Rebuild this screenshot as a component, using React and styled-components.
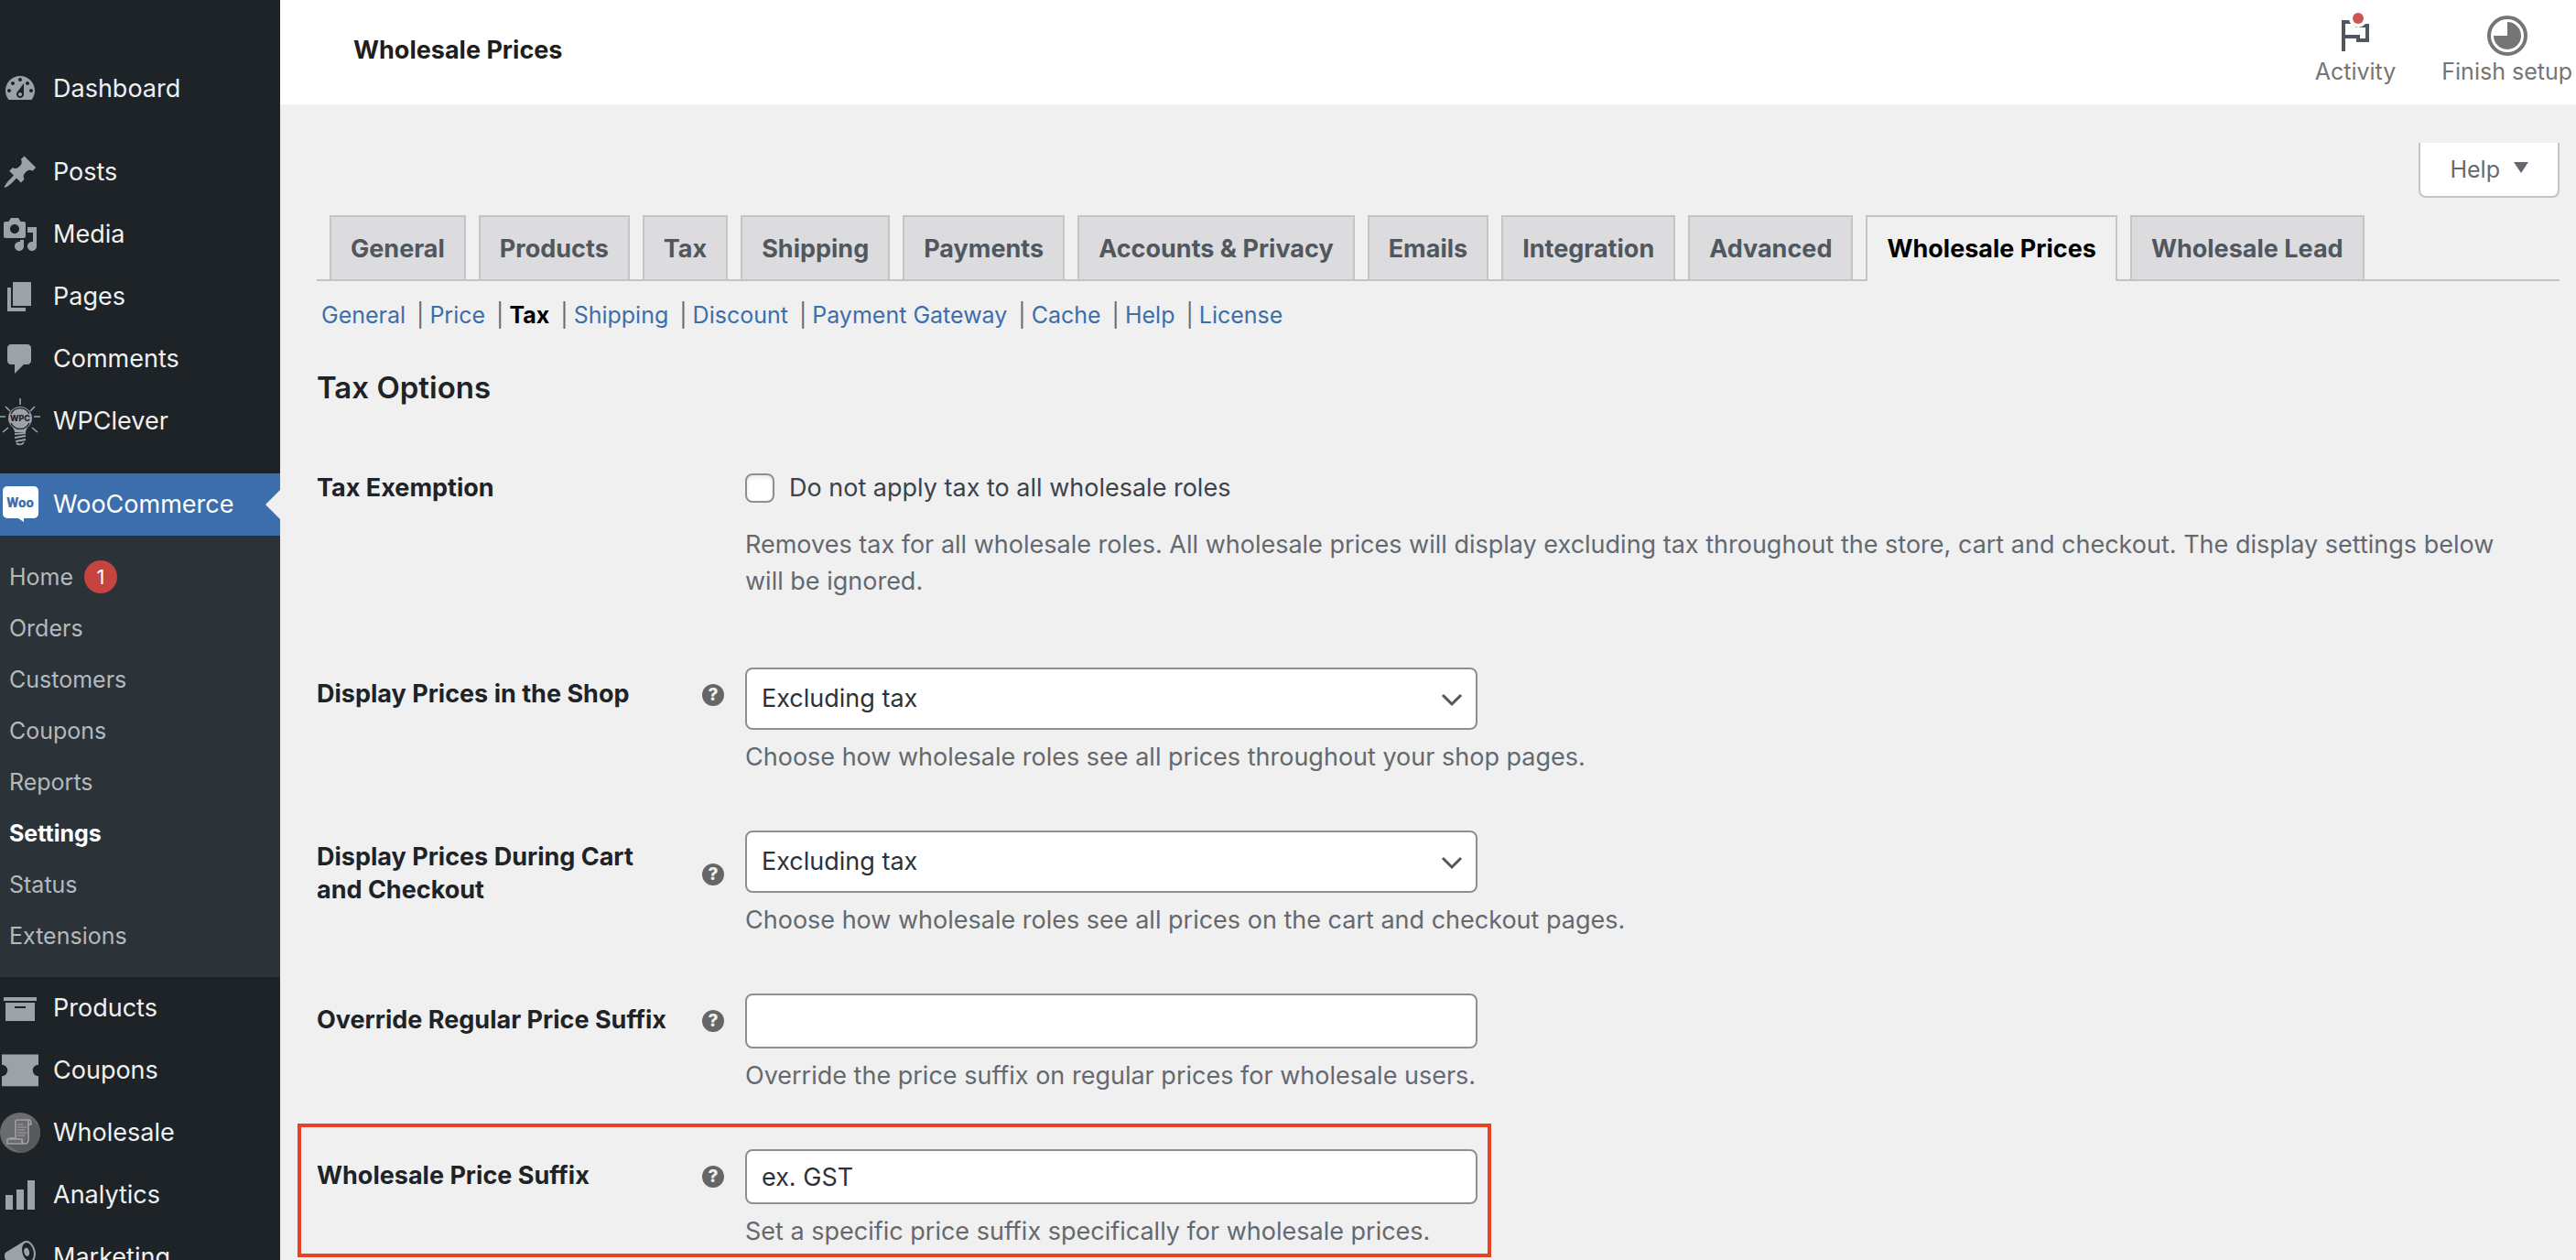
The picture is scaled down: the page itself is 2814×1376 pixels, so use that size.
import React from 'react';
import styled, { createGlobalStyle, css } from 'styled-components';

const GlobalStyle = createGlobalStyle`
  *,
  *::before,
  *::after {
    box-sizing: border-box;
  }

  body {
    margin: 0;
    background: #f0f0f0;
    color: #3c434a;
    font-family: Inter, "Liberation Sans", sans-serif;
    font-size: 27px;
    line-height: 36px;
  }
`;

const Shell = styled.div`
  display: flex;
  height: 100vh;
  overflow: hidden;
`;

/* ---------- sidebar ---------- */

const Sidebar = styled.nav`
  flex: 0 0 306px;
  padding-top: 63px;
  background: #1d2327;
  overflow: hidden;
`;

const MenuList = styled.ul`
  margin: 0 0 23px;
  padding: 0;
  list-style: none;
`;

const MenuLink = styled.a`
  position: relative;
  display: flex;
  align-items: center;
  gap: 14px;
  height: 68px;
  color: #f0f0f1;
  text-decoration: none;

  ${({ $current }) =>
    $current &&
    css`
      background: #3c6eab;
      color: #fff;

      &::after {
        content: '';
        position: absolute;
        right: 0;
        border: 16px solid transparent;
        border-left-width: 0;
        border-right-color: #f0f0f0;
      }
    `}
`;

const MenuIcon = styled.svg`
  flex: none;
  width: 44px;
  height: 56px;
  fill: #9ca2a7;
`;

const SubMenu = styled.ul`
  margin: 0;
  padding: 17px 0;
  background: #2c3338;
  list-style: none;
`;

const SubLink = styled.a`
  display: flex;
  align-items: center;
  gap: 12px;
  height: 56px;
  padding-left: 10px;
  color: ${({ $current }) => ($current ? '#fff' : '#b4b9bd')};
  font-size: 25px;
  font-weight: ${({ $current }) => ($current ? 700 : 400)};
  text-decoration: none;
`;

const Badge = styled.span`
  width: 36px;
  border-radius: 18px;
  background: #c5443f;
  color: #fff;
  font-size: 22px;
  text-align: center;
`;

/* ---------- header ---------- */

const Main = styled.div`
  flex: 1;
  min-width: 0;
`;

const Header = styled.header`
  display: flex;
  justify-content: space-between;
  height: 114px;
  padding: 0 4px 0 80px;
  background: #fff;
`;

const HeaderTitle = styled.h1`
  margin: 37px 0 0;
  color: #1e1e1e;
  font-size: 27px;
  font-weight: 700;
`;

const HeaderActions = styled.div`
  display: flex;
  gap: 50px;
`;

const HeaderButton = styled.button`
  display: flex;
  flex-direction: column;
  align-items: center;
  padding: 14px 0 0;
  border: 0;
  background: none;
  color: #757575;
  font: inherit;
  font-size: 25px;
  line-height: 32px;

  svg {
    width: 48px;
    height: 48px;
  }
`;

/* ---------- settings page ---------- */

const Content = styled.main`
  padding: 42px 18px 0 40px;
`;

const HelpRow = styled.div`
  display: flex;
  justify-content: flex-end;
  margin-bottom: 19px;
`;

const HelpButton = styled.button`
  display: flex;
  align-items: center;
  gap: 15px;
  height: 60px;
  padding: 0 32px;
  border: 2px solid #c3c4c7;
  border-top: 0;
  border-radius: 0 0 8px 8px;
  background: #fff;
  color: #646970;
  font: inherit;
  font-size: 25px;

  &::after {
    content: '';
    border: 8px solid transparent;
    border-top: 12px solid #646970;
    border-bottom: 0;
    margin-bottom: 4px;
  }
`;

const Tabs = styled.nav`
  display: flex;
  gap: 14px;
  height: 72px;
  padding-left: 14px;
  border-bottom: 2px solid #c3c4c7;
`;

const Tab = styled.a`
  height: ${({ $current }) => ($current ? 72 : 70)}px;
  padding: 17px 21px;
  border: 2px solid #c3c4c7;
  border-bottom: 0;
  background: ${({ $current }) => ($current ? '#f0f0f0' : '#dcdcde')};
  color: ${({ $current }) => ($current ? '#000' : '#50575e')};
  font-weight: 700;
  text-decoration: none;
  white-space: nowrap;
`;

const Sections = styled.ul`
  display: flex;
  margin: 19px 0 0;
  padding: 0 0 0 5px;
  color: #646970;
  font-size: 25px;
  list-style: none;

  li + li::before {
    content: '|';
    margin: 0 6px 0 12px;
  }
`;

const SectionLink = styled.a`
  color: ${({ $current }) => ($current ? '#000' : '#3c6eab')};
  font-weight: ${({ $current }) => ($current ? 700 : 400)};
  text-decoration: none;
`;

const SectionTitle = styled.h2`
  margin: 40px 0 30px;
  color: #1d2327;
  font-size: 33px;
  font-weight: 600;
  line-height: 42px;
`;

const Field = styled.div`
  position: relative;
  display: flex;
  padding: 30px 30px 30px 0;

  ${({ $highlight }) =>
    $highlight &&
    css`
      &::after {
        content: '';
        position: absolute;
        top: 2px;
        left: -21px;
        width: 1304px;
        max-width: 100%;
        height: 146px;
        border: 4px solid #e84126;
        pointer-events: none;
      }
    `}
`;

const FieldHead = styled.div`
  display: flex;
  flex: 0 0 468px;
  align-items: center;
  align-self: flex-start;
  justify-content: space-between;
  padding: 11px 23px 0 0;
`;

const FieldLabel = styled.label`
  max-width: 400px;
  color: #1d2327;
  font-weight: 700;
`;

const HelpTip = styled.span`
  flex: none;
  width: 24px;
  height: 24px;
  margin-top: 2px;
  border-radius: 12px;
  background: #666;
  color: #f0f0f0;
  font-size: 19px;
  font-weight: 800;
  line-height: 24px;
  text-align: center;
`;

const FieldBody = styled.div`
  flex: 1;
  min-width: 0;
`;

const control = css`
  display: block;
  width: 800px;
  max-width: 100%;
  padding: 0 16px;
  border: 2px solid #8c8f94;
  border-radius: 8px;
  background: #fff;
  color: #2c3338;
  font: inherit;
`;

const TextInput = styled.input`
  ${control}
  height: 60px;
`;

const SelectWrap = styled.div`
  display: grid;
  align-items: center;
  width: 800px;
  max-width: 100%;

  > * {
    grid-area: 1 / 1;
  }

  svg {
    justify-self: end;
    width: 24px;
    height: 24px;
    margin-right: 16px;
    pointer-events: none;
  }
`;

const Select = styled.select`
  ${control}
  height: 68px;
  appearance: none;
`;

const CheckRow = styled.label`
  display: flex;
  align-items: center;
  gap: 16px;
  padding-top: 11px;
`;

const Checkbox = styled.input`
  width: 32px;
  height: 32px;
  margin: 0;
  border: 2px solid #8c8f94;
  border-radius: 8px;
  background: #fff;
  box-shadow: inset 0 2px 4px rgba(0, 0, 0, 0.1);
  appearance: none;
`;

const Description = styled.p`
  margin: ${({ $roomy }) => ($roomy ? '24px 0 14px' : '10px 0 0')};
  color: #646970;
  line-height: 40px;
`;

/* ---------- icons ---------- */

const glyphs = {
  dashboard:
    'M3.76 16h12.48c1.1-1.37 1.76-3.11 1.76-5 0-4.42-3.58-8-8-8s-8 3.58-8 8c0 1.89.66 3.63 1.76 5zM10 4c.55 0 1 .45 1 1s-.45 1-1 1-1-.45-1-1 .45-1 1-1zM6 6c.55 0 1 .45 1 1s-.45 1-1 1-1-.45-1-1 .45-1 1-1zm8 0c.55 0 1 .45 1 1s-.45 1-1 1-1-.45-1-1 .45-1 1-1zm-5.37 5.55L12 7v6c0 1.1-.9 2-2 2s-2-.9-2-2c0-.57.24-1.08.63-1.45zM4 10c.55 0 1 .45 1 1s-.45 1-1 1-1-.45-1-1 .45-1 1-1zm12 0c.55 0 1 .45 1 1s-.45 1-1 1-1-.45-1-1 .45-1 1-1zm-5 3c0-.55-.45-1-1-1s-1 .45-1 1 .45 1 1 1 1-.45 1-1z',
  posts:
    'M10.44 3.02l1.82-1.82 6.36 6.35-1.83 1.82c-1.05-.68-2.48-.57-3.41.36l-.75.75c-.92.93-1.04 2.35-.35 3.41l-1.83 1.82-2.41-2.41-2.8 2.79c-.42.42-3.38 2.71-3.8 2.29s1.86-3.39 2.28-3.81l2.79-2.79L4.1 9.36l1.83-1.82c1.05.69 2.48.57 3.4-.36l.75-.75c.93-.92 1.05-2.35.36-3.41z',
  media:
    'M13 11V4c0-.55-.45-1-1-1h-1.67L9 1H5L3.67 3H2c-.55 0-1 .45-1 1v7c0 .55.45 1 1 1h10c.55 0 1-.45 1-1zM7 4.5c1.38 0 2.5 1.12 2.5 2.5S8.38 9.5 7 9.5 4.5 8.38 4.5 7 5.62 4.5 7 4.5zM14 6h5v10.5c0 1.38-1.12 2.5-2.5 2.5S14 17.88 14 16.5s1.12-2.5 2.5-2.5c.17 0 .34.02.5.05V9h-3V6zm-4 8.05V13h2v3.5c0 1.38-1.12 2.5-2.5 2.5S7 17.88 7 16.5 8.12 14 9.5 14c.17 0 .34.02.5.05z',
  pages: 'M6 15V2h10v13H6zm-1 1h8v2H3V5h2v11z',
  comments: 'M5 2h9c1.1 0 2 .9 2 2v7c0 1.1-.9 2-2 2h-2l-5 5v-5H5c-1.1 0-2-.9-2-2V4c0-1.1.9-2 2-2z',
  products: 'M19 4v2H1V4h18zM2 7h16v10H2V7zm11 3V9H7v1h6z',
  coupons: 'M0 1.3h20v5.6a3.1 3.1 0 0 0 0 6.2v5.5H0v-5.5a3.1 3.1 0 0 0 0-6.2z',
  analytics: 'M18 18V2h-4v16h4zm-6 0V7H8v11h4zm-6 0v-8H2v8h4z',
  marketing:
    'M18.15 5.94c.46 1.62.38 3.22-.02 4.48-.42 1.28-1.26 2.18-2.3 2.48-.16.06-.26.06-.4.06-.06.02-.12.02-.18.02-.06.02-.14.02-.22.02h-6.8l2.22 5.5c.02.14-.06.26-.14.34-.08.1-.24.16-.34.16H6.95c-.1 0-.26-.06-.34-.16-.08-.08-.16-.2-.14-.34l-1-5.5H4.25l-.02-.02c-.5.06-1.08-.18-1.54-.62s-.88-1.08-1.06-1.88c-.24-.8-.2-1.56-.02-2.2.18-.62.58-1.08 1.06-1.3l.02-.02 9-5.4c.1-.06.18-.1.24-.16.06-.04.14-.08.24-.12.16-.08.28-.12.5-.18 1.04-.3 2.24.1 3.22.98s1.84 2.24 2.26 3.86zm-2.58 5.98h-.02c.4-.1.74-.34 1.04-.7.58-.7.86-1.76.86-3.04 0-.64-.1-1.3-.28-1.98-.34-1.36-1.02-2.5-1.78-3.24s-1.68-1.1-2.46-.88c-.82.22-1.4.96-1.7 2-.32 1.04-.28 2.36.06 3.72.38 1.36 1 2.5 1.8 3.24.78.74 1.62 1.1 2.48.88zm-2.54-7.08c.22-.04.42-.02.62.04.38.16.76.48 1.02 1s.42 1.2.42 1.78c0 .3-.04.56-.12.8-.18.48-.44.84-.86.94-.34.1-.8-.06-1.14-.4s-.64-.86-.78-1.5c-.18-.62-.12-1.24.02-1.72s.48-.84.82-.94z',
};

const GlyphIcon = ({ name }) => (
  <MenuIcon viewBox="-1 -4 22 28" aria-hidden="true">
    <path fillRule="evenodd" d={glyphs[name]} />
  </MenuIcon>
);

const BulbIcon = () => (
  <MenuIcon viewBox="0 0 44 56" aria-hidden="true">
    <path
      d="M22 3v7M6 12l5 5M38 12l-5 5M0 23h6M37 23h7M3 40l6-5M41 40l-6-5"
      stroke="#9ca2a7"
      strokeWidth="1.6"
    />
    <path d="M22 12a13 13 0 0 0-13 13c0 4 2 7 5 10 1 2 2 3 2 5h12c0-2 1-3 2-5 3-3 5-6 5-10a13 13 0 0 0-13-13z" />
    <path d="M12 20a11 11 0 0 1 20 0M12 30a11 11 0 0 0 20 0" fill="none" stroke="#1d2327" strokeWidth="1.4" />
    <path d="M16 42l12-1M16 46l12-2M17 50l11-2M18 52c2 2 6 2 8-1" fill="none" stroke="#9ca2a7" strokeWidth="1.8" />
    <text x="22" y="28" textAnchor="middle" fontSize="9" fontWeight="800" fill="#1d2327">WPC</text>
  </MenuIcon>
);

const WooIcon = () => (
  <MenuIcon viewBox="0 0 44 56" aria-hidden="true">
    <path fill="#fff" d="M8 8h29a5 5 0 0 1 5 5v25a5 5 0 0 1-5 5H26v4l-6-4H8a5 5 0 0 1-5-5V13a5 5 0 0 1 5-5z" />
    <text x="22" y="31" textAnchor="middle" fontFamily="Roboto, sans-serif" fontSize="15" fontWeight="900" fill="#3c6eab">
      Woo
    </text>
  </MenuIcon>
);

const ScrollIcon = () => (
  <MenuIcon viewBox="0 0 44 56" aria-hidden="true">
    <circle cx="22" cy="28" r="22" fill="#6b6c6e" />
    <path d="M34 12l9 10a22 22 0 0 1-20 28L8 41l20-3z" fill="#58595b" />
    <path
      d="M17 34V16c0-1 1-2 2-2h13c2 0 2 4 2 5h-3M31 15v20c0 4-2 5-4 5H8v-5h16v4M10 34h7M24 35c0 3 1 5 3 5"
      fill="none"
      stroke="#a0a1a3"
      strokeWidth="1.6"
    />
    <path d="M19 19h6M19 22h10M19 25h8M19 28h10M19 31h8" stroke="#a0a1a3" strokeWidth="1.2" />
  </MenuIcon>
);

const FlagIcon = () => (
  <svg viewBox="0 0 48 48" aria-hidden="true">
    <path d="M11 42V10h15v4h11v16H27v-4H11" fill="none" stroke="#50575e" strokeWidth="4" />
    <circle cx="27" cy="6" r="10" fill="#fff" />
    <circle cx="27" cy="6" r="6" fill="#cb5653" />
  </svg>
);

const SetupIcon = () => (
  <svg viewBox="0 0 48 48" aria-hidden="true">
    <circle cx="24" cy="25" r="20" fill="none" stroke="#757575" strokeWidth="4" />
    <path d="M24 25V10a15 15 0 1 1-15 15z" fill="#757575" />
  </svg>
);

const ChevronIcon = () => (
  <svg viewBox="0 0 24 24" aria-hidden="true">
    <path d="M2 8l10 10 10-10" fill="none" stroke="#50575e" strokeWidth="3" />
  </svg>
);

/* ---------- data ---------- */

const contentMenu = [
  { label: 'Posts', icon: <GlyphIcon name="posts" /> },
  { label: 'Media', icon: <GlyphIcon name="media" /> },
  { label: 'Pages', icon: <GlyphIcon name="pages" /> },
  { label: 'Comments', icon: <GlyphIcon name="comments" /> },
  { label: 'WPClever', icon: <BulbIcon /> },
];

const storeMenu = [
  { label: 'Products', icon: <GlyphIcon name="products" /> },
  { label: 'Coupons', icon: <GlyphIcon name="coupons" /> },
  { label: 'Wholesale', icon: <ScrollIcon /> },
  { label: 'Analytics', icon: <GlyphIcon name="analytics" /> },
  { label: 'Marketing', icon: <GlyphIcon name="marketing" /> },
];

const subMenu = ['Home', 'Orders', 'Customers', 'Coupons', 'Reports', 'Settings', 'Status', 'Extensions'];

const tabs = [
  'General',
  'Products',
  'Tax',
  'Shipping',
  'Payments',
  'Accounts & Privacy',
  'Emails',
  'Integration',
  'Advanced',
  'Wholesale Prices',
  'Wholesale Lead',
];

const sections = ['General', 'Price', 'Tax', 'Shipping', 'Discount', 'Payment Gateway', 'Cache', 'Help', 'License'];

const MenuItem = ({ label, icon }) => (
  <li>
    <MenuLink href="#">
      {icon}
      {label}
    </MenuLink>
  </li>
);

const SettingRow = ({ id, label, description, highlight, children }) => (
  <Field $highlight={highlight}>
    <FieldHead>
      <FieldLabel htmlFor={id}>{label}</FieldLabel>
      <HelpTip title={description}>?</HelpTip>
    </FieldHead>
    <FieldBody>
      {children}
      <Description>{description}</Description>
    </FieldBody>
  </Field>
);

const TaxSelect = ({ id }) => (
  <SelectWrap>
    <Select id={id} defaultValue="excl">
      <option value="excl">Excluding tax</option>
      <option value="incl">Including tax</option>
    </Select>
    <ChevronIcon />
  </SelectWrap>
);

const App = () => {
  return (
    <Shell>
      <GlobalStyle />
      <Sidebar>
        <MenuList>
          <MenuItem label="Dashboard" icon={<GlyphIcon name="dashboard" />} />
        </MenuList>
        <MenuList>
          {contentMenu.map((item) => (
            <MenuItem key={item.label} {...item} />
          ))}
        </MenuList>
        <MenuList>
          <li>
            <MenuLink href="#" $current>
              <WooIcon />
              WooCommerce
            </MenuLink>
            <SubMenu>
              {subMenu.map((label) => (
                <li key={label}>
                  <SubLink href="#" $current={label === 'Settings'}>
                    {label}
                    {label === 'Home' && <Badge>1</Badge>}
                  </SubLink>
                </li>
              ))}
            </SubMenu>
          </li>
          {storeMenu.map((item) => (
            <MenuItem key={item.label} {...item} />
          ))}
        </MenuList>
      </Sidebar>

      <Main>
        <Header>
          <HeaderTitle>Wholesale Prices</HeaderTitle>
          <HeaderActions>
            <HeaderButton type="button">
              <FlagIcon />
              Activity
            </HeaderButton>
            <HeaderButton type="button">
              <SetupIcon />
              Finish setup
            </HeaderButton>
          </HeaderActions>
        </Header>

        <Content>
          <HelpRow>
            <HelpButton type="button">Help</HelpButton>
          </HelpRow>
          <Tabs>
            {tabs.map((tab) => (
              <Tab key={tab} href="#" $current={tab === 'Wholesale Prices'}>
                {tab}
              </Tab>
            ))}
          </Tabs>
          <Sections>
            {sections.map((section) => (
              <li key={section}>
                <SectionLink href="#" $current={section === 'Tax'}>
                  {section}
                </SectionLink>
              </li>
            ))}
          </Sections>

          <SectionTitle>Tax Options</SectionTitle>
          <Field>
            <FieldHead>
              <FieldLabel htmlFor="tax-exemption">Tax Exemption</FieldLabel>
            </FieldHead>
            <FieldBody>
              <CheckRow>
                <Checkbox type="checkbox" id="tax-exemption" />
                Do not apply tax to all wholesale roles
              </CheckRow>
              <Description $roomy>
                Removes tax for all wholesale roles. All wholesale prices will display excluding tax
                throughout the store, cart and checkout. The display settings below will be ignored.
              </Description>
            </FieldBody>
          </Field>
          <SettingRow
            id="shop-prices"
            label="Display Prices in the Shop"
            description="Choose how wholesale roles see all prices throughout your shop pages."
          >
            <TaxSelect id="shop-prices" />
          </SettingRow>
          <SettingRow
            id="cart-prices"
            label="Display Prices During Cart and Checkout"
            description="Choose how wholesale roles see all prices on the cart and checkout pages."
          >
            <TaxSelect id="cart-prices" />
          </SettingRow>
          <SettingRow
            id="regular-suffix"
            label="Override Regular Price Suffix"
            description="Override the price suffix on regular prices for wholesale users."
          >
            <TextInput id="regular-suffix" type="text" />
          </SettingRow>
          <SettingRow
            id="wholesale-suffix"
            label="Wholesale Price Suffix"
            description="Set a specific price suffix specifically for wholesale prices."
            highlight
          >
            <TextInput id="wholesale-suffix" type="text" defaultValue="ex. GST" />
          </SettingRow>
        </Content>
      </Main>
    </Shell>
  );
};

export default App;
